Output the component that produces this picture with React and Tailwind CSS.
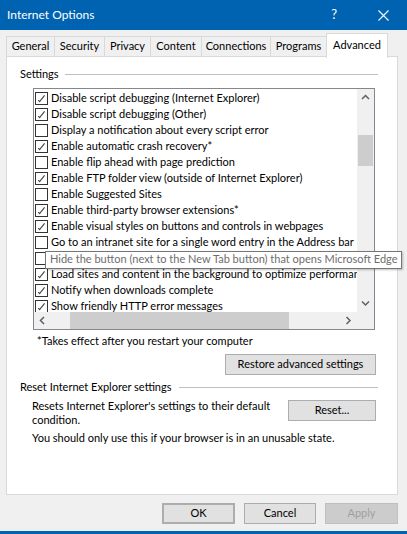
import React from 'react';

const font = { fontFamily: 'Lato, "Noto Sans", sans-serif' };

const tabs = [
  { name: 'General', w: 'w-[49px]' },
  { name: 'Security', w: 'w-[51px]' },
  { name: 'Privacy', w: 'w-[47px]' },
  { name: 'Content', w: 'w-[52px]' },
  { name: 'Connections', w: 'w-[70px]' },
  { name: 'Programs', w: 'w-[57px]' },
];

const rows = [
  ['Disable script debugging (Internet Explorer)', true],
  ['Disable script debugging (Other)', true],
  ['Display a notification about every script error', false],
  ['Enable automatic crash recovery*', true],
  ['Enable flip ahead with page prediction', false],
  ['Enable FTP folder view (outside of Internet Explorer)', true],
  ['Enable Suggested Sites', false],
  ['Enable third-party browser extensions*', true],
  ['Enable visual styles on buttons and controls in webpages', true],
  ['Go to an intranet site for a single word entry in the Address bar', false],
  ['Hide the button (next to the New Tab button) that opens Microsoft Edge', false],
  ['Load sites and content in the background to optimize performance', true],
  ['Notify when downloads complete', true],
  ['Show friendly HTTP error messages', true],
];

const CheckBox = ({ checked }) => (
  <svg width="13" height="13" viewBox="0 0 13 13" className="shrink-0">
    <rect x="0.5" y="0.5" width="12" height="12" fill="#fff" stroke="#333" />
    {checked && <path d="M3.2 8 L4.6 9.6 L9.6 3.4" fill="none" stroke="#444" strokeWidth="1.1" />}
  </svg>
);

const Chevron = ({ dir }) => {
  const d = {
    up: 'M1 5 L4.5 1.5 L8 5',
    down: 'M1 1.5 L4.5 5 L8 1.5',
    left: 'M5 1 L1.5 4.5 L5 8',
    right: 'M1.5 1 L5 4.5 L1.5 8',
  }[dir];
  const vertical = dir === 'up' || dir === 'down';
  return (
    <svg width={vertical ? 9 : 7} height={vertical ? 7 : 9} viewBox={vertical ? '0 0 9 7' : '0 0 7 9'}>
      <path d={d} fill="none" stroke="#606060" strokeWidth="1.5" />
    </svg>
  );
};

const Button = ({ children, className }) => (
  <div className={`flex items-center justify-center h-[21px] bg-[#e1e1e1] border border-[#adadad] text-black whitespace-nowrap ${className}`}>
    {children}
  </div>
);

const App = () => {
  return (
    <div className="w-[407px] h-[534px] flex flex-col bg-[#f0f0f0] overflow-hidden text-[11px] text-black" style={font}>
      <div className="h-[30px] bg-[#0063b1] flex items-center text-white shrink-0">
        <span className="ml-[7px] text-[12px]">Internet Options</span>
        <span className="ml-auto mr-[41px] text-[13px]">?</span>
        <svg width="11" height="11" viewBox="0 0 11 11" className="mr-[18px]">
          <path d="M0.5 0.5 L10.5 10.5 M10.5 0.5 L0.5 10.5" stroke="#fff" strokeWidth="1.1" />
        </svg>
      </div>

      <div className="flex items-end mt-[3px] ml-[6px] h-[24px] relative z-10">
        {tabs.map((t) => (
          <div
            key={t.name}
            className={`${t.w} h-[20px] mb-[1px] -mr-px flex items-center justify-center border border-b-0 border-[#d9d9d9] bg-[#f0f0f0] whitespace-nowrap`}
          >
            {t.name}
          </div>
        ))}
        <div className="w-[62px] h-[25px] -mb-px flex items-start justify-center pt-[3px] border border-b-0 border-[#d9d9d9] bg-white">
          Advanced
        </div>
      </div>

      <div className="ml-[6px] w-[392px] h-[439px] -mt-px bg-white border border-[#d9d9d9] flex flex-col">
        <div className="flex items-center mt-[9px] ml-[13px] mr-[19px]">
          <span>Settings</span>
          <div className="flex-1 h-px bg-[#bfbfbf] ml-[6px]" />
        </div>

        <div className="relative ml-[26px] mt-[5px] w-[342px] h-[242px] border border-[#828790]">
          <div className="flex h-full">
            <div className="flex-1 flex flex-col overflow-hidden">
              <div className="flex-1 overflow-hidden pt-[2px]">
                {rows.map(([label, checked]) => (
                  <div key={label} className="h-[16px] flex items-center whitespace-nowrap">
                    <span className="ml-[1px] flex"><CheckBox checked={checked} /></span>
                    <span className="ml-[3px]">{label}</span>
                  </div>
                ))}
              </div>
              <div className="h-[17px] bg-[#f0f0f0] flex items-center shrink-0">
                <div className="w-[17px] flex justify-center"><Chevron dir="left" /></div>
                <div className="flex-1 h-full">
                  <div className="ml-[19px] w-[219px] h-full bg-[#cdcdcd]" />
                </div>
                <div className="w-[17px] flex justify-center"><Chevron dir="right" /></div>
              </div>
            </div>
            <div className="w-[17px] bg-[#f0f0f0] flex flex-col">
              <div className="h-[17px] flex items-center justify-center"><Chevron dir="up" /></div>
              <div className="flex-1">
                <div className="mt-[29px] h-[31px] bg-[#cdcdcd] mx-px" />
              </div>
              <div className="h-[17px] flex items-center justify-center"><Chevron dir="down" /></div>
              <div className="h-[17px] bg-[#f0f0f0]" />
            </div>
          </div>
          <div className="absolute left-[11px] top-[162px] w-[357px] h-[18px] bg-white border border-[#767676] shadow-[1px_1px_2px_rgba(0,0,0,0.25)] flex items-center pl-[4px] text-[#6d6d6d] whitespace-nowrap">
            Hide the button (next to the New Tab button) that opens Microsoft Edge
          </div>
        </div>

        <div className="ml-[30px] mt-[3px]">*Takes effect after you restart your computer</div>
        <div className="flex justify-end mr-[21px] mt-[5px]">
          <Button className="w-[151px]">Restore advanced settings</Button>
        </div>

        <div className="flex items-center mt-[4px] ml-[13px] mr-[19px]">
          <span>Reset Internet Explorer settings</span>
          <div className="flex-1 h-px bg-[#bfbfbf] ml-[8px]" />
        </div>
        <div className="flex items-start mt-[3px] ml-[25px] mr-[21px]">
          <div className="leading-[14px] whitespace-nowrap">
            Resets Internet Explorer's settings to their default
            <br />
            condition.
          </div>
          <Button className="w-[88px] ml-auto mt-[1px]">Reset...</Button>
        </div>
        <div className="ml-[25px] mt-[3px]">You should only use this if your browser is in an unusable state.</div>
      </div>

      <div className="flex justify-end mt-[8px] mr-[9px] gap-[9px]">
        <Button className="w-[73px] border-2 border-[#0078d7]">OK</Button>
        <Button className="w-[72px]">Cancel</Button>
        <div className="w-[73px] h-[21px] flex items-center justify-center bg-[#cccccc] border border-[#bfbfbf] text-[#a0a0a0]">
          Apply
        </div>
      </div>
      <div className="mt-auto h-[3px] bg-[#0063b1]" />
    </div>
  );
};

export default App;
